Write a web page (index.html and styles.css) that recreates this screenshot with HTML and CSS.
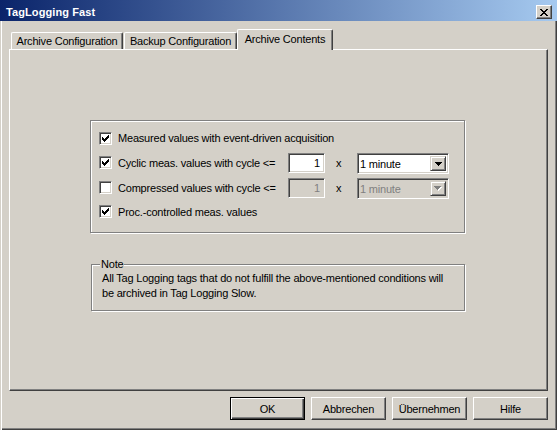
FILE: index.html
```html
<!DOCTYPE html>
<html>
<head>
<meta charset="utf-8">
<title>TagLogging Fast</title>
<link rel="stylesheet" href="styles.css">
</head>
<body>
<div class="window">
  <div class="titlebar">
    <span class="title">TagLogging Fast</span>
    <span class="close"><svg width="8" height="7" viewBox="0 0 8 7" shape-rendering="crispEdges"><path fill="#000" d="M0 0h2v1H0z M6 0h2v1H6z M1 1h2v1H1z M5 1h2v1H5z M2 2h4v1H2z M3 3h2v1H3z M2 4h4v1H2z M1 5h2v1H1z M5 5h2v1H5z M0 6h2v1H0z M6 6h2v1H6z"/></svg></span>
  </div>
  <div class="content">
    <div class="tabs">
      <div class="tab tab1">Archive Configuration</div>
      <div class="tab tab2">Backup Configuration</div>
      <div class="tab active">Archive Contents</div>
    </div>
    <div class="panel">
      <div class="group">
        <div class="cell span">
          <span class="check on"><svg width="11" height="11" viewBox="0 0 11 11" shape-rendering="crispEdges"><path fill="#000" d="M2 4h1v3H2z M3 5h1v3H3z M4 6h1v3H4z M5 5h1v3H5z M6 4h1v3H6z M7 3h1v3H7z M8 2h1v3H8z"/></svg></span>
          <span>Measured values with event-driven acquisition</span>
        </div>

        <div class="cell">
          <span class="check on"><svg width="11" height="11" viewBox="0 0 11 11" shape-rendering="crispEdges"><path fill="#000" d="M2 4h1v3H2z M3 5h1v3H3z M4 6h1v3H4z M5 5h1v3H5z M6 4h1v3H6z M7 3h1v3H7z M8 2h1v3H8z"/></svg></span>
          <span>Cyclic meas. values with cycle &lt;=</span>
        </div>
        <div class="textbox">1</div>
        <div class="times">x</div>
        <div class="combo">
          <span class="combo-text">1 minute</span>
          <span class="drop"><svg width="7" height="4" viewBox="0 0 7 4" shape-rendering="crispEdges"><path fill="#000" d="M0 0h7v1H0z M1 1h5v1H1z M2 2h3v1H2z M3 3h1v1H3z"/></svg></span>
        </div>

        <div class="cell">
          <span class="check"></span>
          <span>Compressed values with cycle &lt;=</span>
        </div>
        <div class="textbox disabled">1</div>
        <div class="times">x</div>
        <div class="combo disabled">
          <span class="combo-text">1 minute</span>
          <span class="drop"><svg width="8" height="5" viewBox="0 0 8 5" shape-rendering="crispEdges"><path fill="#fff" d="M1 1h7v1H1z M2 2h5v1H2z M3 3h3v1H3z M4 4h1v1H4z"/><path fill="#808080" d="M0 0h7v1H0z M1 1h5v1H1z M2 2h3v1H2z M3 3h1v1H3z"/></svg></span>
        </div>

        <div class="cell span">
          <span class="check on"><svg width="11" height="11" viewBox="0 0 11 11" shape-rendering="crispEdges"><path fill="#000" d="M2 4h1v3H2z M3 5h1v3H3z M4 6h1v3H4z M5 5h1v3H5z M6 4h1v3H6z M7 3h1v3H7z M8 2h1v3H8z"/></svg></span>
          <span>Proc.-controlled meas. values</span>
        </div>
      </div>

      <div class="note">
        <span class="legend">Note</span>
        <p class="note-text">All Tag Logging tags that do not fulfill the above-mentioned conditions will<br>be archived in Tag Logging Slow.</p>
      </div>
    </div>
    <div class="buttons">
      <button class="btn default">OK</button>
      <button class="btn">Abbrechen</button>
      <button class="btn">Übernehmen</button>
      <button class="btn">Hilfe</button>
    </div>
  </div>
</div>
</body>
</html>
```
FILE: styles.css
```css
* { box-sizing: border-box; }
html, body { margin: 0; padding: 0; }
body {
  width: 557px;
  height: 430px;
  overflow: hidden;
  background: #d4d0c8;
  font-family: "Liberation Sans", Arial, sans-serif;
  font-size: 11px;
  letter-spacing: -0.2px;
  color: #000;
}
.window {
  width: 557px;
  height: 430px;
  background: #d4d0c8;
  box-shadow: inset 1px 1px #d4d0c8, inset 2px 2px #fff, inset -1px -1px #404040, inset -2px -2px #808080;
  display: flex;
  flex-direction: column;
}
.titlebar {
  height: 21px;
  flex: none;
  background: linear-gradient(to right, #0a246a, #a6caf0);
  display: flex;
  align-items: flex-start;
  justify-content: space-between;
  padding: 0 5px 0 6px;
}
.title {
  color: #fff;
  font-weight: bold;
  letter-spacing: 0.1px;
  line-height: 13px;
  margin-top: 6px;
}
.close {
  width: 16px;
  height: 14px;
  margin-top: 5px;
  background: #d4d0c8;
  border: 1px solid;
  border-color: #fff #404040 #404040 #fff;
  box-shadow: inset -1px -1px #808080;
  display: flex;
  align-items: center;
  justify-content: center;
}
.content {
  flex: 1;
  padding: 8px 9px 0 9px;
  display: flex;
  flex-direction: column;
}
.tabs {
  display: flex;
  align-items: flex-end;
  height: 20px;
  padding-left: 2px;
}
.tab {
  height: 17px;
  border-top: 1px solid #fff;
  border-left: 1px solid #fff;
  border-right: 1px solid #404040;
  box-shadow: inset -1px 0 #808080;
  border-radius: 2px 2px 0 0;
  display: flex;
  align-items: center;
  justify-content: center;
  white-space: nowrap;
  background: #d4d0c8;
}
.tab1 { width: 112px; margin-right: 1px; }
.tab2 { width: 113px; }
.tab.active {
  width: 96px;
  height: 21px;
  margin-bottom: -1px;
  padding-bottom: 2px;
  position: relative;
  z-index: 1;
}
.panel {
  height: 342px;
  border: 1px solid;
  border-color: #fff #404040 #404040 #fff;
  box-shadow: inset -1px -1px #808080;
  display: flex;
  flex-direction: column;
  align-items: flex-start;
}
.group {
  margin: 70px 0 0 80px;
  width: 375px;
  height: 113px;
  border: 1px solid #808080;
  box-shadow: 1px 1px #fff, inset 1px 1px #fff;
  padding: 5px 0 0 8px;
  display: grid;
  grid-template-columns: 189px 37px 32px 92px;
  grid-template-rows: 24px 25px 25px 23px;
}
.cell {
  display: flex;
  align-items: center;
  gap: 6px;
  white-space: nowrap;
}
.cell.span { grid-column: 1 / -1; }
.check {
  width: 13px;
  height: 13px;
  flex: none;
  background: #fff;
  border: 1px solid;
  border-color: #808080 #fff #fff #808080;
  box-shadow: inset 1px 1px #404040, inset -1px -1px #d4d0c8;
  display: block;
}
.check svg { display: block; }
.textbox {
  align-self: start;
  margin-top: 3px;
  height: 20px;
  background: #fff;
  border: 1px solid;
  border-color: #808080 #fff #fff #808080;
  box-shadow: inset 1px 1px #404040, inset -1px -1px #d4d0c8;
  text-align: right;
  padding-right: 4px;
  line-height: 18px;
}
.textbox.disabled { background: #d4d0c8; color: #808080; }
.times {
  display: flex;
  align-items: center;
  padding-left: 11px;
}
.combo {
  align-self: start;
  margin-top: 3px;
  height: 21px;
  background: #fff;
  border: 1px solid;
  border-color: #808080 #fff #fff #808080;
  box-shadow: inset 1px 1px #404040, inset -1px -1px #d4d0c8;
  padding: 2px 2px 2px 2px;
  display: flex;
  align-items: stretch;
}
.combo-text {
  flex: 1;
  display: flex;
  align-items: center;
  white-space: nowrap;
}
.combo.disabled { background: #d4d0c8; color: #808080; }
.drop {
  width: 16px;
  flex: none;
  background: #d4d0c8;
  border: 1px solid;
  border-color: #d4d0c8 #404040 #404040 #d4d0c8;
  box-shadow: inset 1px 1px #fff, inset -1px -1px #808080;
  display: flex;
  align-items: center;
  justify-content: center;
}
.drop svg { display: block; }
.note {
  position: relative;
  margin: 31px 0 0 81px;
  width: 374px;
  height: 47px;
  border: 1px solid #808080;
  box-shadow: 1px 1px #fff, inset 1px 1px #fff;
}
.legend {
  position: absolute;
  left: 8px;
  top: -7px;
  padding: 0 1px;
  line-height: 13px;
  background: #d4d0c8;
}
.note-text {
  margin: 0;
  padding: 6px 0 0 10px;
  line-height: 15px;
  white-space: nowrap;
}
.buttons {
  margin-top: 6px;
  display: flex;
  justify-content: flex-end;
  gap: 6px;
}
.btn {
  width: 75px;
  height: 23px;
  margin: 0;
  padding: 0;
  font: inherit;
  letter-spacing: inherit;
  color: #000;
  background: #d4d0c8;
  border: 1px solid;
  border-color: #fff #404040 #404040 #fff;
  box-shadow: inset -1px -1px #808080;
  border-radius: 0;
  text-align: center;
}
.btn.default {
  border-color: #000;
  box-shadow: inset 1px 1px #fff, inset -1px -1px #404040, inset -2px -2px #808080;
}
```
